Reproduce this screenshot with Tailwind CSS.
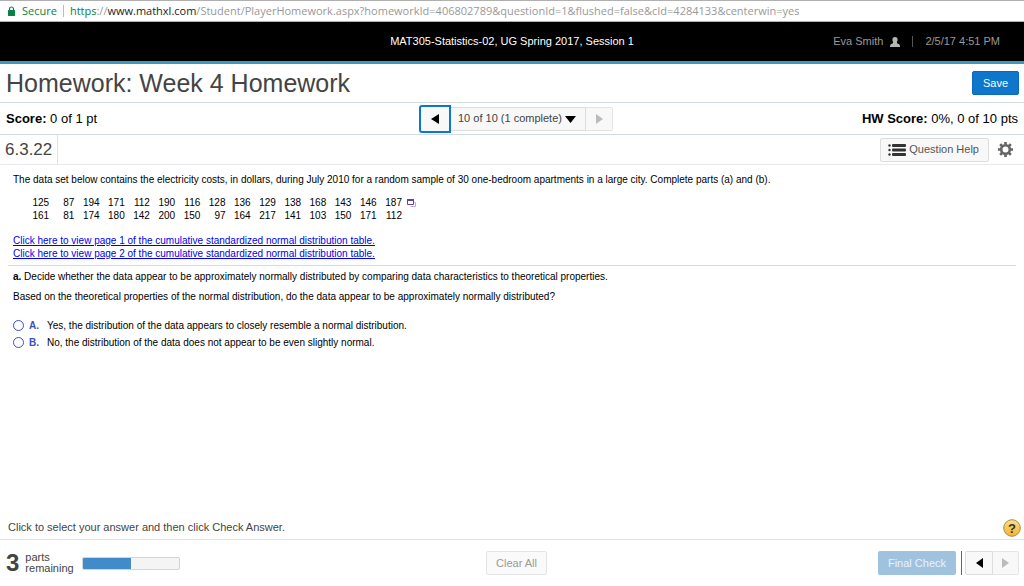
<!DOCTYPE html>
<html lang="en">
<head>
  <meta charset="UTF-8" />
  <meta name="viewport" content="width=device-width, initial-scale=1.0" />
  <title>Homework: Week 4 Homework</title>
  <script src="https://cdn.jsdelivr.net/npm/@tailwindcss/browser@4"></script>
</head>
<body class="min-h-screen flex flex-col bg-white text-black text-[11px] font-['Liberation_Sans',Arial,sans-serif]">
  <!-- Address bar -->
  <div class="h-[22px] flex items-center border-y border-[#b0b0b0] pl-2 text-[11px] whitespace-nowrap font-['Open_Sans',sans-serif]">
    <svg class="w-[7px] h-[10px] mr-[7px]" viewBox="0 0 7 10" fill="none">
      <path d="M1.5 5V3a2 2 0 0 1 4 0v2" stroke="#0b8043" stroke-width="1.2" />
      <rect y="4" width="7" height="6" rx="0.6" fill="#0b8043" />
    </svg>
    <span class="text-[#0b8043]">Secure</span>
    <span class="w-px h-3 bg-[#bbb] mx-[6px]"></span>
    <span class="text-[#999]"><span class="text-[#0b8043]">https</span>://<span class="text-[#222]">www.mathxl.com</span>/Student/PlayerHomework.aspx?homeworkId=406802789&amp;questionId=1&amp;flushed=false&amp;cId=4284133&amp;centerwin=yes</span>
  </div>

  <!-- Course header -->
  <header class="h-[42px] grid grid-cols-[1fr_auto_1fr] items-center bg-black border-b-[3px] border-[#3b9abf] px-6 text-[#9a9a9a]">
    <span></span>
    <span class="text-white">MAT305-Statistics-02, UG Spring 2017, Session 1</span>
    <div class="flex items-center justify-end">
      <span>Eva Smith</span>
      <svg class="w-[10px] h-[10px] ml-[7px]" viewBox="0 0 10 10" fill="#b5b5b5">
        <ellipse cx="5" cy="2.8" rx="2.6" ry="2.8" />
        <path d="M3 4.8h4v1.4l2.300 1q.7.5.7 2.800H0q0-2.300.7-2.800L3 6.200z" />
      </svg>
      <span class="w-px h-[11px] bg-[#555] mx-3"></span>
      <span>2/5/17 4:51 PM</span>
    </div>
  </header>

  <!-- Assignment title -->
  <div class="h-[39px] flex items-center justify-between pl-[6px] pr-[5px] border-b border-[#d3dae0]">
    <h1 class="text-[25px] leading-[30px] text-[#444]">Homework: Week 4 Homework</h1>
    <button type="button" class="h-6 px-[10px] rounded-[2px] bg-[#0f77cb] border border-[#0a69b8] text-white">Save</button>
  </div>

  <!-- Score and question picker -->
  <div class="h-8 grid grid-cols-[1fr_auto_1fr] items-center px-[6px] border-b border-[#d3dae0]">
    <div class="text-[13px]"><b>Score:</b> 0 of 1 pt</div>
    <div class="flex items-center ml-2 text-[#444]">
      <button type="button" aria-label="Previous question" class="w-8 h-[28px] flex items-center justify-center rounded-l-[3px] border-2 border-[#0f77cb] bg-[#f8f8f8]">
        <svg class="w-2 h-[10px]" viewBox="0 0 8 10" fill="#000"><path d="M8 0v10L0 5z" /></svg>
      </button>
      <div class="relative">
        <select aria-label="Question" class="appearance-none w-[135px] h-6 pl-[7px] border-y border-r border-[#ddd] bg-[#f8f8f8]">
          <option>10 of 10 (1 complete)</option>
        </select>
        <svg class="absolute right-[10px] top-[9px] w-[11px] h-[7px] pointer-events-none" viewBox="0 0 11 7" fill="#000"><path d="M0 0h11L5.500 7z" /></svg>
      </div>
      <button type="button" aria-label="Next question" disabled class="w-[27px] h-6 flex items-center justify-center rounded-r-[2px] border-y border-r border-[#e4e4e4] bg-[#f8f8f8]">
        <svg class="w-[7px] h-[10px]" viewBox="0 0 7 10" fill="#bbb"><path d="M0 0v10l7-5z" /></svg>
      </button>
    </div>
    <div class="text-right text-[13px]"><b>HW Score:</b> 0%, 0 of 10 pts</div>
  </div>

  <!-- Exercise number and help -->
  <div class="h-[30px] flex items-center border-b border-[#e6e9ee] text-[#444]">
    <h2 class="h-full flex items-center px-[5px] border-r border-[#dde2e9] text-[17px]">6.3.22</h2>
    <button type="button" class="ml-auto h-6 flex items-center pl-[7px] pr-[9px] rounded-[2px] border border-[#ddd] bg-[#f8f8f8] text-[#555]">
      <svg class="w-[18px] h-[12px] mr-[3px]" viewBox="0 0 18 12" fill="#333">
        <circle cx="1.500" cy="1.500" r="1.200" /><circle cx="1.500" cy="6" r="1.200" /><circle cx="1.500" cy="10.500" r="1.200" />
        <rect x="4" width="14" height="3" rx="1" /><rect x="4" y="4.500" width="14" height="3" rx="1" /><rect x="4" y="9" width="14" height="3" rx="1" />
      </svg>
      Question Help
    </button>
    <button type="button" aria-label="Settings" class="ml-[9px] mr-[11px]">
      <svg class="w-[15px] h-[15px]" viewBox="0 0 16 16" fill="none" stroke="#666">
        <circle cx="8" cy="8" r="4.600" stroke-width="2.800" />
        <path d="M8 0v3M8 13v3M0 8h3M13 8h3M2.300 2.300l2.200 2.200M11.500 11.500l2.200 2.200M2.300 13.700l2.200-2.200M11.500 4.500l2.200-2.200" stroke-width="2.800" />
      </svg>
    </button>
  </div>

  <!-- Question -->
  <main class="flex-1 px-2 pt-2 text-[10px] leading-[13px]">
    <div class="px-[5px]">
      <p>The data set below contains the electricity costs, in dollars, during July 2010 for a random sample of 30 one-bedroom apartments in a large city. Complete parts (a) and (b).</p>
      <div class="flex items-start mt-[10px] ml-[11px]">
        <table class="table-fixed w-[378px] text-right">
          <tr>
            <td>125</td><td>87</td><td>194</td><td>171</td><td>112</td>
            <td>190</td><td>116</td><td>128</td><td>136</td><td>129</td>
            <td>138</td><td>168</td><td>143</td><td>146</td><td>187</td>
          </tr>
          <tr>
            <td>161</td><td>81</td><td>174</td><td>180</td><td>142</td>
            <td>200</td><td>150</td><td>97</td><td>164</td><td>217</td>
            <td>141</td><td>103</td><td>150</td><td>171</td><td>112</td>
          </tr>
        </table>
        <button type="button" aria-label="Open data" class="ml-[5px] mt-[3px]">
          <svg class="w-[9px] h-2" viewBox="0 0 9 8" fill="none">
            <path d="M3.500 7.500h5v-4h-1" stroke="#b9aedb" />
            <path d="M.5 1h6v4.500h-6z" fill="#fff" stroke="#5b45a8" />
            <path d="M0 1h7" stroke="#5b45a8" stroke-width="2" />
          </svg>
        </button>
      </div>
      <div class="mt-3 text-[#0000ee] underline">
        <a href="#page1" class="block">Click here to view page 1 of the cumulative standardized normal distribution table.</a>
        <a href="#page2" class="block">Click here to view page 2 of the cumulative standardized normal distribution table.</a>
      </div>
    </div>
    <hr class="mt-[5px] border-[#d3dae0]" />
    <div class="px-[5px] pt-1">
      <p><b>a.</b> Decide whether the data appear to be approximately normally distributed by comparing data characteristics to theoretical properties.</p>
      <p class="mt-[7px]">Based on the theoretical properties of the normal distribution, do the data appear to be approximately normally distributed?</p>
      <div class="mt-[14px] flex flex-col">
        <label class="h-[17px] flex items-center">
          <input type="radio" name="answer" class="appearance-none w-[11px] h-[11px] rounded-full border border-[#3a4fc4] checked:bg-[#3a4fc4]" />
          <b class="w-[18px] ml-[5px] text-[#3a4fc4]">A.</b>Yes, the distribution of the data appears to closely resemble a normal distribution.
        </label>
        <label class="h-[17px] flex items-center">
          <input type="radio" name="answer" class="appearance-none w-[11px] h-[11px] rounded-full border border-[#3a4fc4] checked:bg-[#3a4fc4]" />
          <b class="w-[18px] ml-[5px] text-[#3a4fc4]">B.</b>No, the distribution of the data does not appear to be even slightly normal.
        </label>
      </div>
    </div>
  </main>

  <!-- Hint line -->
  <div class="h-6 flex items-center justify-between pl-2 pr-[3px] border-b border-[#dfe2ec] text-[#444]">
    <p>Click to select your answer and then click Check Answer.</p>
    <button type="button" aria-label="Help">
      <svg class="w-[18px] h-[18px]" viewBox="0 0 18 18">
        <defs>
          <linearGradient id="gold" x1="0" y1="0" x2="0" y2="1"><stop offset="0" stop-color="#fde08a" /><stop offset="1" stop-color="#f2b32c" /></linearGradient>
        </defs>
        <circle cx="9" cy="9" r="8.300" fill="url(#gold)" stroke="#a98b4a" />
        <text x="9" y="13.500" text-anchor="middle" font-size="13" font-weight="bold" fill="#333">?</text>
      </svg>
    </button>
  </div>

  <!-- Footer -->
  <footer class="h-[46px] grid grid-cols-[1fr_auto_1fr] items-center pl-[6px] pr-[5px] text-[#444]">
    <div class="flex items-center">
      <b class="text-[24px] leading-6">3</b>
      <div class="ml-[6px] leading-[11px]">
        <p>parts</p>
        <p>remaining</p>
      </div>
      <div role="progressbar" aria-label="Parts completed" aria-valuenow="50" class="w-[98px] h-[13px] ml-2 rounded-[2px] border border-[#d5d5d5] bg-[#f4f4f4] overflow-hidden">
        <div class="h-full bg-[#428bca]" style="width: 50%"></div>
      </div>
    </div>
    <button type="button" disabled class="h-6 ml-2 px-[9px] rounded-[2px] border border-[#e4e4e4] bg-[#fafafa] text-[#999]">Clear All</button>
    <div class="flex items-center justify-end">
      <button type="button" disabled class="h-6 px-[10px] rounded-[2px] bg-[#9fc3df] text-[#e9f2f9]">Final Check</button>
      <span class="w-px h-6 ml-[5px] mr-[3px] bg-[#666]"></span>
      <button type="button" aria-label="Previous" class="w-7 h-6 flex items-center justify-center rounded-l-[2px] border border-[#ddd] bg-[#f8f8f8]">
        <svg class="w-[7px] h-[10px]" viewBox="0 0 7 10" fill="#000"><path d="M7 0v10L0 5z" /></svg>
      </button>
      <button type="button" aria-label="Next" disabled class="w-[26px] h-6 flex items-center justify-center rounded-r-[2px] border-y border-r border-[#e4e4e4] bg-[#f8f8f8]">
        <svg class="w-[7px] h-[10px]" viewBox="0 0 7 10" fill="#bbb"><path d="M0 0v10l7-5z" /></svg>
      </button>
    </div>
  </footer>
</body>
</html>
